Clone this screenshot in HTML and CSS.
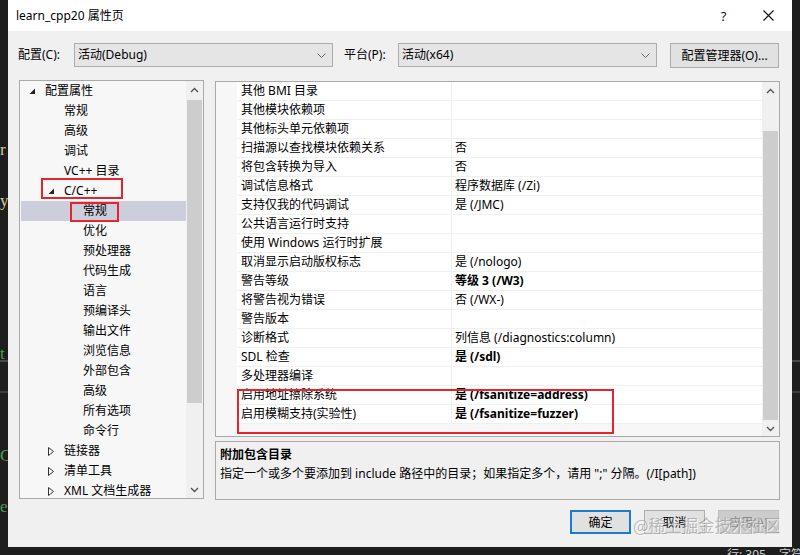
FILE: index.html
```html
<!DOCTYPE html>
<html lang="zh-CN">
<head>
    <meta charset="UTF-8">
    <title>learn_cpp20 属性页</title>
    <link rel="stylesheet" href="styles.css">
</head>
<body>
    <!-- editor behind the dialog -->
    <div class="editor">
        <div class="code-line code-str">r</div>
        <div class="code-line"></div>
        <div class="code-line code-str">y</div>
        <div class="code-line"></div>
        <div class="code-line"></div>
        <div class="code-line"></div>
        <div class="code-line"></div>
        <div class="code-line"></div>
        <div class="code-line code-type">t</div>
        <div class="code-line"></div>
        <div class="code-line"></div>
        <div class="code-line"></div>
        <div class="code-line code-type">C</div>
        <div class="code-line"></div>
        <div class="code-line code-type">e</div>
    </div>
    <div class="statusbar">
        <span>行: 305</span>
        <span>字符: 1</span>
    </div>

    <div class="dialog">
        <div class="titlebar">
            <span class="title">learn_cpp20 属性页</span>
            <div class="title-actions">
                <span class="title-btn">?</span>
                <span class="title-btn">
                    <svg width="11" height="11" viewBox="0 0 11 11"><path d="M0.5 0.5L10.5 10.5M10.5 0.5L0.5 10.5" stroke="#111" stroke-width="1.1" fill="none"/></svg>
                </span>
            </div>
        </div>

        <div class="config-row">
            <span class="config-label">配置(C):</span>
            <div class="combo">
                <span>活动(Debug)</span>
                <svg width="9" height="5" viewBox="0 0 9 5"><polyline points="0.5,0.5 4.5,4.5 8.5,0.5" stroke="#666" fill="none"/></svg>
            </div>
            <span class="config-label platform-label">平台(P):</span>
            <div class="combo">
                <span>活动(x64)</span>
                <svg width="9" height="5" viewBox="0 0 9 5"><polyline points="0.5,0.5 4.5,4.5 8.5,0.5" stroke="#666" fill="none"/></svg>
            </div>
            <button class="btn btn-manager">配置管理器(O)...</button>
        </div>

        <div class="main">
            <div class="tree">
                <div class="tree-list">
                    <div class="tree-row lvl0"><span class="twisty"><svg width="7" height="7" viewBox="0 0 7 7"><polygon points="6,0.5 6,6 0.5,6" fill="#222"/></svg></span>配置属性</div>
                    <div class="tree-row lvl1"><span class="twisty"></span>常规</div>
                    <div class="tree-row lvl1"><span class="twisty"></span>高级</div>
                    <div class="tree-row lvl1"><span class="twisty"></span>调试</div>
                    <div class="tree-row lvl1"><span class="twisty"></span>VC++ 目录</div>
                    <div class="tree-row lvl1"><span class="twisty"><svg width="7" height="7" viewBox="0 0 7 7"><polygon points="6,0.5 6,6 0.5,6" fill="#222"/></svg></span>C/C++</div>
                    <div class="tree-row lvl2 selected"><span class="twisty"></span>常规</div>
                    <div class="tree-row lvl2"><span class="twisty"></span>优化</div>
                    <div class="tree-row lvl2"><span class="twisty"></span>预处理器</div>
                    <div class="tree-row lvl2"><span class="twisty"></span>代码生成</div>
                    <div class="tree-row lvl2"><span class="twisty"></span>语言</div>
                    <div class="tree-row lvl2"><span class="twisty"></span>预编译头</div>
                    <div class="tree-row lvl2"><span class="twisty"></span>输出文件</div>
                    <div class="tree-row lvl2"><span class="twisty"></span>浏览信息</div>
                    <div class="tree-row lvl2"><span class="twisty"></span>外部包含</div>
                    <div class="tree-row lvl2"><span class="twisty"></span>高级</div>
                    <div class="tree-row lvl2"><span class="twisty"></span>所有选项</div>
                    <div class="tree-row lvl2"><span class="twisty"></span>命令行</div>
                    <div class="tree-row lvl1"><span class="twisty"><svg width="6" height="9" viewBox="0 0 6 9"><polygon points="0.5,0.5 5.5,4.5 0.5,8.5" fill="none" stroke="#333"/></svg></span>链接器</div>
                    <div class="tree-row lvl1"><span class="twisty"><svg width="6" height="9" viewBox="0 0 6 9"><polygon points="0.5,0.5 5.5,4.5 0.5,8.5" fill="none" stroke="#333"/></svg></span>清单工具</div>
                    <div class="tree-row lvl1"><span class="twisty"><svg width="6" height="9" viewBox="0 0 6 9"><polygon points="0.5,0.5 5.5,4.5 0.5,8.5" fill="none" stroke="#333"/></svg></span>XML 文档生成器</div>
                </div>
                <div class="scrollbar">
                    <div class="sb-arrow"><svg width="9" height="6" viewBox="0 0 9 6"><polyline points="1,5 4.5,1.5 8,5" stroke="#555" stroke-width="1.4" fill="none"/></svg></div>
                    <div class="sb-thumb tree-thumb"></div>
                    <div class="sb-track"></div>
                    <div class="sb-arrow"><svg width="9" height="6" viewBox="0 0 9 6"><polyline points="1,1 4.5,4.5 8,1" stroke="#555" stroke-width="1.4" fill="none"/></svg></div>
                </div>
                <div class="mark mark-cpp"></div>
                <div class="mark mark-general"></div>
            </div>

            <div class="right-pane">
                <div class="grid">
                    <div class="grid-rows">
                        <div class="grid-row"><div class="gutter"></div><div class="name">其他 BMI 目录</div><div class="value"></div></div>
                        <div class="grid-row"><div class="gutter"></div><div class="name">其他模块依赖项</div><div class="value"></div></div>
                        <div class="grid-row"><div class="gutter"></div><div class="name">其他标头单元依赖项</div><div class="value"></div></div>
                        <div class="grid-row"><div class="gutter"></div><div class="name">扫描源以查找模块依赖关系</div><div class="value">否</div></div>
                        <div class="grid-row"><div class="gutter"></div><div class="name">将包含转换为导入</div><div class="value">否</div></div>
                        <div class="grid-row"><div class="gutter"></div><div class="name">调试信息格式</div><div class="value">程序数据库 (/Zi)</div></div>
                        <div class="grid-row"><div class="gutter"></div><div class="name">支持仅我的代码调试</div><div class="value">是 (/JMC)</div></div>
                        <div class="grid-row"><div class="gutter"></div><div class="name">公共语言运行时支持</div><div class="value"></div></div>
                        <div class="grid-row"><div class="gutter"></div><div class="name">使用 Windows 运行时扩展</div><div class="value"></div></div>
                        <div class="grid-row"><div class="gutter"></div><div class="name">取消显示启动版权标志</div><div class="value">是 (/nologo)</div></div>
                        <div class="grid-row"><div class="gutter"></div><div class="name">警告等级</div><div class="value bold">等级 3 (/W3)</div></div>
                        <div class="grid-row"><div class="gutter"></div><div class="name">将警告视为错误</div><div class="value">否 (/WX-)</div></div>
                        <div class="grid-row"><div class="gutter"></div><div class="name">警告版本</div><div class="value"></div></div>
                        <div class="grid-row"><div class="gutter"></div><div class="name">诊断格式</div><div class="value">列信息 (/diagnostics:column)</div></div>
                        <div class="grid-row"><div class="gutter"></div><div class="name">SDL 检查</div><div class="value bold">是 (/sdl)</div></div>
                        <div class="grid-row"><div class="gutter"></div><div class="name">多处理器编译</div><div class="value"></div></div>
                        <div class="grid-row"><div class="gutter"></div><div class="name">启用地址擦除系统</div><div class="value bold">是 (/fsanitize=address)</div></div>
                        <div class="grid-row"><div class="gutter"></div><div class="name">启用模糊支持(实验性)</div><div class="value bold">是 (/fsanitize=fuzzer)</div></div>
                    </div>
                    <div class="scrollbar">
                        <div class="sb-arrow"><svg width="9" height="6" viewBox="0 0 9 6"><polyline points="1,5 4.5,1.5 8,5" stroke="#555" stroke-width="1.4" fill="none"/></svg></div>
                        <div class="sb-thumb grid-thumb"></div>
                        <div class="sb-track"></div>
                        <div class="sb-arrow"><svg width="9" height="6" viewBox="0 0 9 6"><polyline points="1,1 4.5,4.5 8,1" stroke="#555" stroke-width="1.4" fill="none"/></svg></div>
                    </div>
                    <div class="mark mark-sanitize"></div>
                </div>

                <div class="desc">
                    <div class="desc-title">附加包含目录</div>
                    <div class="desc-text">指定一个或多个要添加到 include 路径中的目录；如果指定多个，请用 ";" 分隔。(/I[path])</div>
                </div>
            </div>
        </div>

        <div class="dialog-buttons">
            <button class="btn btn-default">确定</button>
            <button class="btn">取消</button>
            <button class="btn btn-disabled">应用(A)</button>
        </div>

        <div class="watermark">@稀土掘金技术社区</div>
    </div>
</body>
</html>
```

FILE: styles.css
```css
* {
    box-sizing: border-box;
}

html, body {
    margin: 0;
    padding: 0;
}

body {
    width: 800px;
    height: 555px;
    overflow: hidden;
    position: relative;
    display: flex;
    flex-direction: column;
    background: #1e1e1e;
    font-family: "Noto Sans", "Noto Sans CJK SC", sans-serif;
    font-size: 12px;
    color: #000;
}

/* editor behind */
.editor {
    height: 547px;
    padding-top: 137px;
    font-family: "Liberation Serif", serif;
    font-size: 17px;
    background:
        linear-gradient(#4a4a4a, #4a4a4a) 0 360px / 100% 2px no-repeat,
        linear-gradient(#3c3c3c, #3c3c3c) 0 391px / 100% 2px no-repeat,
        #1e1e1e;
}

.code-line {
    height: 25.5px;
    line-height: 25.5px;
    white-space: pre;
}

.code-str {
    color: #d6c7a4;
}

.code-type {
    color: #4f9a55;
}

.statusbar {
    height: 8px;
    overflow: hidden;
    display: flex;
    gap: 13px;
    padding-left: 727px;
    padding-top: 1px;
    color: #cfcfcf;
    font-size: 12px;
    line-height: 14px;
    white-space: nowrap;
}

/* dialog window */
.dialog {
    position: absolute;
    left: 8px;
    top: 0;
    width: 784px;
    height: 547px;
    background: #f0f0f0;
    display: flex;
    flex-direction: column;
}

.titlebar {
    height: 31px;
    background: #fff;
    display: flex;
    align-items: center;
    justify-content: space-between;
    padding-left: 8px;
    padding-right: 1px;
    line-height: 16px;
}

.title-actions {
    display: flex;
    height: 31px;
}

.title-btn {
    width: 45px;
    display: flex;
    align-items: center;
    justify-content: center;
    font-size: 13px;
    color: #111;
}

.config-row {
    margin-top: 12px;
    height: 24px;
    display: flex;
    align-items: center;
    padding-left: 10px;
}

.config-label {
    width: 56px;
    line-height: 16px;
}

.platform-label {
    width: 54px;
    margin-left: 11px;
}

.combo {
    width: 259px;
    height: 24px;
    background: #e5e5e5;
    border: 1px solid #acacac;
    display: flex;
    align-items: center;
    justify-content: space-between;
    padding: 0 6px 0 3px;
    line-height: 16px;
}

.btn {
    width: 61px;
    height: 24px;
    padding: 0;
    background: #e1e1e1;
    border: 1px solid #adadad;
    font-family: inherit;
    font-size: 12px;
    color: #000;
}

.btn-manager {
    width: 109px;
    height: 25px;
    margin-left: 13px;
}

.btn-default {
    border: 2px solid #1a7ad4;
}

.btn-disabled {
    background: #cccccc;
    border-color: #bfbfbf;
    color: #8a8a8a;
}

.main {
    margin-top: 13px;
    height: 420px;
    display: flex;
    gap: 11px;
    padding-left: 11px;
}

/* tree */
.tree {
    width: 185px;
    height: 419px;
    border: 1px solid #a9a9a9;
    background: #f7f7f7;
    position: relative;
    display: flex;
    overflow: hidden;
}

.tree-list {
    flex: 1;
    padding-left: 1px;
    overflow: hidden;
}

.tree-row {
    height: 20px;
    display: flex;
    align-items: center;
    white-space: nowrap;
    line-height: 16px;
}

.tree-row.lvl0 { padding-left: 8px; }
.tree-row.lvl1 { padding-left: 27px; }
.tree-row.lvl2 { padding-left: 46px; }

.tree-row.selected {
    background: #cccedb;
}

.twisty {
    width: 16px;
    flex: none;
    display: flex;
    align-items: center;
}

/* scrollbars */
.scrollbar {
    width: 17px;
    flex: none;
    background: #f0f0f0;
    display: flex;
    flex-direction: column;
}

.sb-arrow {
    height: 17px;
    flex: none;
    display: flex;
    align-items: center;
    justify-content: center;
}

.sb-thumb {
    margin: 0 1px;
    background: #cdcdcd;
    flex: none;
}

.tree-thumb {
    margin-top: 2px;
    height: 303px;
}

.grid-thumb {
    margin-top: 32px;
    height: 289px;
}

.sb-track {
    flex: 1;
}

/* property grid */
.right-pane {
    width: 565px;
    display: flex;
    flex-direction: column;
    gap: 4px;
}

.grid {
    margin-top: 1px;
    height: 356px;
    border: 1px solid #a9a9a9;
    background: #fff;
    position: relative;
    display: flex;
}

.grid-rows {
    flex: 1;
    background: #f7f7f7;
}

.grid-row {
    height: 19px;
    display: flex;
    line-height: 18px;
    white-space: nowrap;
}

.gutter {
    width: 21px;
    flex: none;
}

.name {
    width: 214px;
    flex: none;
    padding-left: 4px;
    background: #fff;
    border-bottom: 1px solid #f0f0f0;
}

.value {
    flex: 1;
    padding-left: 3px;
    background: #fff;
    border-left: 1px solid #f0f0f0;
    border-bottom: 1px solid #f0f0f0;
}

.bold {
    font-weight: bold;
}

.desc {
    height: 59px;
    border: 1px solid #a9a9a9;
    padding: 3px 4px 0;
    line-height: 19px;
    white-space: nowrap;
}

.desc-title {
    font-weight: bold;
}

/* red annotation boxes */
.mark {
    position: absolute;
    border: 2px solid #e3262b;
}

.mark-cpp {
    left: 21px;
    top: 97px;
    width: 82px;
    height: 21px;
}

.mark-general {
    left: 50px;
    top: 121px;
    width: 49px;
    height: 20px;
}

.mark-sanitize {
    left: 21px;
    top: 307px;
    width: 377px;
    height: 45px;
}

.dialog-buttons {
    margin-top: 10px;
    display: flex;
    justify-content: flex-end;
    gap: 13px;
    padding-right: 13px;
}

.watermark {
    position: absolute;
    left: 625px;
    top: 515px;
    font-family: "Noto Sans CJK SC", sans-serif;
    font-size: 16.5px;
    line-height: 20px;
    color: rgba(140, 140, 140, 0.55);
    text-shadow: 1px 1px 0 rgba(255, 255, 255, 0.7);
    white-space: nowrap;
}
```
